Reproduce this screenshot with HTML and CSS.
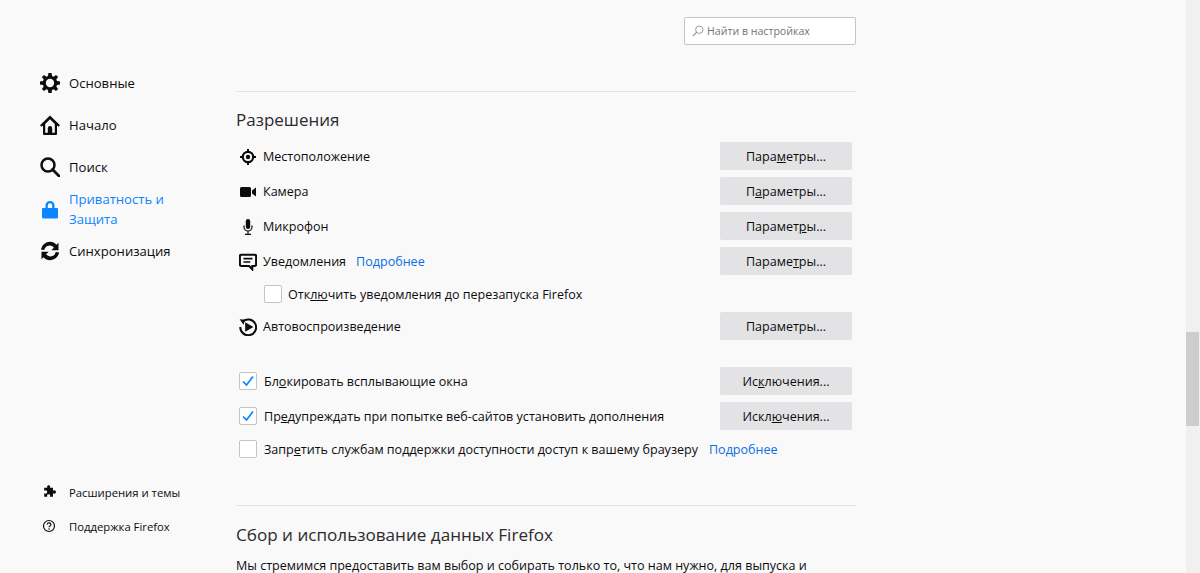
FILE: index.html
```html
<!DOCTYPE html>
<html lang="ru">
<head>
<meta charset="utf-8">
<title>Настройки</title>
<link rel="stylesheet" href="styles.css">
</head>
<body>
<div class="page">
  <nav class="sidebar">
    <ul class="nav-main">
      <li class="nav-item"><svg class="nav-icon" viewBox="0 0 20 20"><g fill="#0c0c0d"><path d="M8.400 0h3.200l.4 3 1.600.7L16 1.900l2.100 2.100-1.800 2.400.7 1.600 3 .4v3.200l-3 .4-.7 1.600 1.800 2.400-2.100 2.100-2.400-1.800-1.600.7-.4 3H8.400l-.4-3-1.600-.7L4 18.100 1.900 16l1.800-2.400-.7-1.600-3-.4V8.400l3-.4.7-1.600L1.900 4 4 1.900l2.400 1.800 1.600-.7z"/></g><circle cx="10" cy="10" r="4.200" fill="#f9f9fa"/></svg><span>Основные</span></li>
      <li class="nav-item"><svg class="nav-icon" viewBox="0 0 20 20"><path d="M10 .5 0 10.200l1.500 1.500L3 10.400V19a1 1 0 0 0 1 1h12a1 1 0 0 0 1-1v-8.600l1.500 1.300 1.500-1.500z" fill="#0c0c0d"/><path d="M5.200 9 10 4.300 14.800 9v8.800h-2.600v-4.600a2.200 2.200 0 0 0-4.400 0v4.600H5.200z" fill="#f9f9fa"/><rect x="9" y="14" width="2" height="4" fill="#0c0c0d"/></svg><span>Начало</span></li>
      <li class="nav-item"><svg class="nav-icon" viewBox="0 0 20 20"><circle cx="8" cy="8" r="6.500" fill="none" stroke="#0c0c0d" stroke-width="2.500"/><path d="M12.500 12.500 19 19" stroke="#0c0c0d" stroke-width="2.800" stroke-linecap="round"/></svg><span>Поиск</span></li>
      <li class="nav-item nav-active"><svg class="nav-icon" viewBox="0 0 20 20"><path d="M5.500 9V6.500a4.500 4.500 0 0 1 9 0V9H17a1 1 0 0 1 1 1v8a1.500 1.500 0 0 1-1.500 1.500h-13A1.500 1.500 0 0 1 2 18v-8a1 1 0 0 1 1-1zm2.300 0h4.400V6.500a2.200 2.200 0 0 0-4.400 0z" fill="#0a84ff"/></svg><span>Приватность и Защита</span></li>
      <li class="nav-item"><svg class="nav-icon" viewBox="0 0 20 20"><path d="M10 .8c2.600 0 4.900 1.100 6.500 2.900L18.500 1.700v7.600h-7.200l2.600-2.600A5.500 5.500 0 0 0 4.200 9L.9 8.400A9.200 9.200 0 0 1 10 .8zM1.500 10.800h7.200l-2.600 2.500a5.500 5.500 0 0 0 9.700-2.300l3.300.6a9.200 9.200 0 0 1-9.100 7.600c-2.600 0-4.900-1.100-6.500-2.900l-2 2z" fill="#0c0c0d"/></svg><span>Синхронизация</span></li>
    </ul>
    <ul class="nav-foot">
      <li class="foot-item"><svg class="foot-icon" viewBox="0 0 16 16"><path d="M6 1.500a1.800 1.800 0 0 1 3.400 0c0 .7-.4 1-.4 1.500h3.500v3.500c.5 0 .8-.5 1.500-.5a2 2 0 0 1 0 4c-.7 0-1-.5-1.500-.5v4H9c0-.6.400-.9.400-1.500a1.900 1.900 0 0 0-3.700 0c0 .6.400.9.400 1.500H2.500v-4c.5 0 .8.500 1.500.500a2 2 0 0 0 0-4C3.300 6 3 6.500 2.500 6.500V3H6c0-.5-.4-.8 0-1.500z" fill="#0c0c0d"/></svg><span>Расширения и темы</span></li>
      <li class="foot-item"><svg class="foot-icon" viewBox="0 0 16 16"><circle cx="8" cy="8" r="6.300" fill="none" stroke="#0c0c0d" stroke-width="1.300"/><path d="M5.800 6.300A2.200 2.200 0 0 1 8 4.500c1.300 0 2.200.8 2.200 1.900 0 1.500-2.200 1.600-2.200 3.100" fill="none" stroke="#0c0c0d" stroke-width="1.300"/><circle cx="8" cy="11.400" r=".9" fill="#0c0c0d"/></svg><span>Поддержка Firefox</span></li>
    </ul>
  </nav>
  <main class="content">
    <div class="search-bar">
      <div class="search-box"><svg class="search-icon" viewBox="0 0 14 14"><circle cx="8.500" cy="5.500" r="4.300" fill="none" stroke="#8a8a8c" stroke-width="1"/><path d="M5.300 8.700 1 13" stroke="#8a8a8c" stroke-width="1.200"/></svg><span class="search-text">Найти в настройках</span></div>
    </div>
    <section class="section">
      <h2 class="section-title">Разрешения</h2>
      <div class="row">
        <div class="row-label"><svg class="perm-icon" viewBox="0 0 16 16"><circle cx="8" cy="8" r="5.200" fill="none" stroke="#0c0c0d" stroke-width="2.200"/><circle cx="8" cy="8" r="2.200" fill="#0c0c0d"/><path d="M8 0v3M8 13v3M0 8h3M13 8h3" stroke="#0c0c0d" stroke-width="2"/></svg><span class="txt">Местоположение</span></div>
        <div class="btn">Пара<u>м</u>етры...</div>
      </div>
      <div class="row">
        <div class="row-label"><svg class="perm-icon" viewBox="0 0 16 16"><path d="M1.500 3h8A1.500 1.500 0 0 1 11 4.500v7A1.500 1.500 0 0 1 9.500 13h-8A1.500 1.500 0 0 1 0 11.500v-7A1.500 1.500 0 0 1 1.500 3zM12 6.500 16 3.500v9l-4-3z" fill="#0c0c0d"/></svg><span class="txt">Камера</span></div>
        <div class="btn">П<u>а</u>раметры...</div>
      </div>
      <div class="row">
        <div class="row-label"><svg class="perm-icon" viewBox="0 0 16 16"><rect x="5.800" y="0" width="4.400" height="10" rx="2.200" fill="#0c0c0d"/><path d="M4 6.500V8a4 4 0 0 0 8 0V6.500M8 12v3M5 15.300h6" fill="none" stroke="#0c0c0d" stroke-width="1.200"/></svg><span class="txt">Микрофон</span></div>
        <div class="btn">Парамет<u>р</u>ы...</div>
      </div>
      <div class="row">
        <div class="row-label"><svg class="perm-icon perm-wide" viewBox="0 0 16 16"><path d="M2 1.500h12A1.200 1.200 0 0 1 15.200 2.700v7.600A1.200 1.200 0 0 1 14 11.500h-2.200v3L9 11.500H2A1.200 1.200 0 0 1 .8 10.300V2.700A1.200 1.200 0 0 1 2 1.500z" fill="none" stroke="#0c0c0d" stroke-width="1.800"/><path d="M4 5h8M4 8h6" stroke="#0c0c0d" stroke-width="1.400"/></svg><span class="txt">Уведомления</span><a class="txt link link-gap">Подробнее</a></div>
        <div class="btn">Параме<u>т</u>ры...</div>
      </div>
      <div class="sub-row">
        <span class="check"></span><span class="txt">Отк<u>лю</u>чить уведомления до перезапуска Firefox</span>
      </div>
      <div class="row row-after-sub">
        <div class="row-label"><svg class="perm-icon perm-wide" viewBox="0 0 16 16"><path d="M3.400 3.200A7 7 0 1 1 1.200 8" fill="none" stroke="#0c0c0d" stroke-width="1.800"/><path d="M.6 1 5.400 1.600 4 6z" fill="#0c0c0d"/><path d="M5.500 3.800 12.800 8l-7.300 4.200z" fill="#0c0c0d"/></svg><span class="txt">Автовоспроизведение</span></div>
        <div class="btn">Параметры...</div>
      </div>
      <div class="row row-spaced">
        <div class="row-label"><span class="check check-on"><svg viewBox="0 0 16 16"><path d="M3 8.500 6.500 12 13 3.500" fill="none" stroke="#0a84ff" stroke-width="1.700"/></svg></span><span class="txt">Бл<u>о</u>кировать всплывающие окна</span></div>
        <div class="btn">Ис<u>к</u>лючения...</div>
      </div>
      <div class="row">
        <div class="row-label"><span class="check check-on"><svg viewBox="0 0 16 16"><path d="M3 8.500 6.500 12 13 3.500" fill="none" stroke="#0a84ff" stroke-width="1.700"/></svg></span><span class="txt">Пр<u>е</u>дупреждать при попытке веб-сайтов установить дополнения</span></div>
        <div class="btn">Искл<u>ю</u>чения...</div>
      </div>
      <div class="plain-row">
        <span class="check"></span><span class="txt">Запр<u>е</u>тить службам поддержки доступности доступ к вашему браузеру</span><a class="txt link link-wide">Подробнее</a>
      </div>
    </section>
    <section class="section section-next">
      <h2 class="section-title section-title-next">Сбор и использование данных Firefox</h2>
      <p class="para">Мы стремимся предоставить вам выбор и собирать только то, что нам нужно, для выпуска и</p>
    </section>
  </main>
  <div class="scrollbar"><div class="thumb"></div></div>
</div>
</body>
</html>
```
FILE: styles.css
```css
* { box-sizing: border-box; }
html, body { margin: 0; height: 100%; overflow: hidden; }
body {
  background: #f9f9fa;
  color: #0c0c0d;
  font-family: "Open Sans", "Noto Sans", sans-serif;
  font-size: 12.55px;
}
.page {
  display: grid;
  grid-template-columns: 236px 620px 1fr 14px;
  grid-template-rows: 573px;
  height: 573px;
}
ul { list-style: none; margin: 0; padding: 0; }
.sidebar {
  display: flex;
  flex-direction: column;
  justify-content: space-between;
  padding: 62px 0 37px 40px;
}
.nav-main { display: flex; flex-direction: column; }
.nav-item {
  display: flex;
  align-items: center;
  gap: 9px;
  width: 150px;
  height: 42px;
  font-size: 13.1px;
  line-height: 20px;
}
.nav-active { color: #0a84ff; }
.nav-icon { width: 20px; height: 20px; flex: none; }
.nav-foot { display: flex; flex-direction: column; gap: 14px; }
.foot-item {
  display: flex;
  align-items: center;
  gap: 13px;
  height: 20px;
  padding-left: 2px;
  font-size: 11.3px;
}
.foot-icon { width: 14px; height: 14px; flex: none; }
.content { display: flex; flex-direction: column; min-height: 0; overflow: hidden; }
.search-bar {
  display: flex;
  flex: none;
  justify-content: flex-end;
  padding-top: 17px;
  height: 91px;
}
.search-box {
  display: flex;
  align-items: center;
  gap: 3px;
  width: 172px;
  height: 28px;
  padding-left: 7px;
  background: #fff;
  border: 1px solid #c5c5c7;
  border-radius: 2px;
}
.search-icon { width: 12px; height: 12px; flex: none; }
.search-text { font-size: 10.6px; color: #737373; }
.section { flex: none; border-top: 1px solid #e3e3e5; }
.section-title {
  margin: 0;
  height: 46px;
  padding-top: 16px;
  font-size: 17px;
  line-height: 24px;
  font-weight: 400;
  color: #2b2b2e;
}
.section-title-next { padding-top: 17px; height: 49px; font-size: 17.1px; }
.row {
  display: flex;
  justify-content: space-between;
  align-items: center;
  height: 35px;
  padding-right: 4px;
}
.row-after-sub { margin-top: -1px; }
.row-spaced { margin-top: 20px; }
.row-label { display: flex; align-items: center; min-width: 0; }
.perm-icon { width: 16px; height: 16px; flex: none; margin: 2px 7px 0 4px; }
.perm-wide { width: 18px; height: 18px; margin: 2px 6px 0 3px; }
.txt { padding-top: 2px; }
.btn {
  width: 132px;
  height: 28px;
  flex: none;
  display: flex;
  align-items: center;
  justify-content: center;
  padding-top: 2px;
  background: #e3e3e5;
  border-radius: 2px;
}
.check {
  width: 18px;
  height: 18px;
  flex: none;
  margin: 0 7px 0 3px;
  background: #fff;
  border: 1px solid #c4c4c6;
  border-radius: 2px;
  display: inline-flex;
  align-items: center;
  justify-content: center;
}
.check-on svg { width: 16px; height: 16px; }
.sub-row {
  display: flex;
  align-items: center;
  height: 31px;
  padding-left: 25px;
}
.sub-row .check { margin-right: 6px; }
.plain-row {
  display: flex;
  align-items: center;
  height: 31px;
}
.link { color: #0a6fe0; }
.link-gap { margin-left: 10px; }
.link-wide { margin-left: 11px; }
.section-next { margin-top: 41px; }
.para { margin: 0; line-height: 22px; }
.scrollbar { grid-column: 4; background: #f0f0f0; position: relative; }
.thumb { position: absolute; top: 332px; left: 0; right: 1px; height: 94px; background: #cdcdcd; }
```
